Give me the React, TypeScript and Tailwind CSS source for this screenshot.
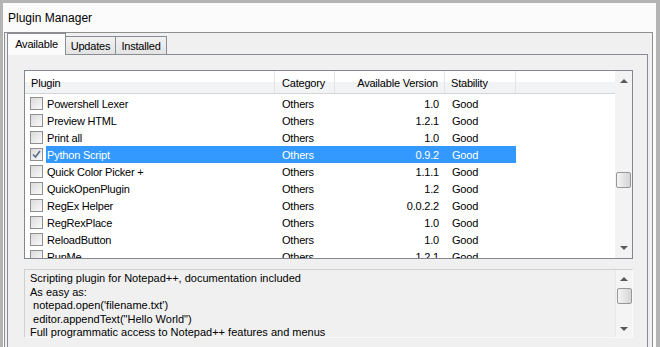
import { useState } from 'react'

const rows = [
  { name: 'Powershell Lexer', version: '1.0' },
  { name: 'Preview HTML', version: '1.2.1' },
  { name: 'Print all', version: '1.0' },
  { name: 'Python Script', version: '0.9.2', checked: true },
  { name: 'Quick Color Picker +', version: '1.1.1' },
  { name: 'QuickOpenPlugin', version: '1.2' },
  { name: 'RegEx Helper', version: '0.0.2.2' },
  { name: 'RegRexPlace', version: '1.0' },
  { name: 'ReloadButton', version: '1.0' },
  { name: 'RunMe', version: '1.2.1' },
]

function UpArrow() {
  return <div className="h-0 w-0 border-x-[4px] border-b-[4px] border-x-transparent border-b-[#5a5a5a]" />
}

function DownArrow() {
  return <div className="h-0 w-0 border-x-[4px] border-t-[4px] border-x-transparent border-t-[#5a5a5a]" />
}

function Thumb() {
  return (
    <div className="mx-auto h-[16px] w-[15px] rounded-[2px] border border-[#979797] bg-gradient-to-r from-[#f4f4f4] to-[#d4d4d4]" />
  )
}

function Checkbox({ checked }: { checked?: boolean }) {
  return (
    <div className="flex h-[13px] w-[13px] shrink-0 items-center justify-center border border-[#8f8f8f] bg-gradient-to-br from-[#dadada] to-[#fafafa]">
      {checked && (
        <svg width="9" height="9" viewBox="0 0 9 9">
          <path d="M1 4.5 L3.5 7 L8 1" fill="none" stroke="#5c6a8a" strokeWidth="1.6" />
        </svg>
      )}
    </div>
  )
}

function PluginList() {
  const [selected, setSelected] = useState(3)
  return (
    <div className="flex h-[189px] w-[609px] border border-[#828790] bg-white">
      <div className="flex w-[590px] flex-col overflow-hidden">
        {/* column headers */}
        <div className="flex h-[23px] shrink-0 border-b border-[#d5d5d5] bg-gradient-to-b from-white from-50% to-[#f2f3f5] to-50%">
          <div className="flex w-[250px] items-center border-r border-[#e3e4e6] pt-[3px] pl-[6px]">Plugin</div>
          <div className="flex w-[60px] items-center border-r border-[#e3e4e6] pt-[3px] pl-[7px]">Category</div>
          <div className="flex w-[110px] items-center justify-end border-r border-[#e3e4e6] pt-[3px] pr-[6px]">Available Version</div>
          <div className="flex w-[71px] items-center border-r border-[#e3e4e6] pt-[3px] pl-[6px]">Stability</div>
        </div>
        <div className="flex flex-col pt-[1px]">
          {rows.map((r, i) => {
            const sel = i === selected
            const hl = sel ? 'bg-[#3399ff] text-white' : ''
            return (
              <div key={r.name} className="flex h-[17px] shrink-0 cursor-default" onClick={() => setSelected(i)}>
                <div className="flex w-[250px] items-center pl-[5px]">
                  <Checkbox checked={r.checked} />
                  <div className={`ml-[3px] flex h-full flex-1 items-center pt-[1px] pl-[1px] ${hl}`}>{r.name}</div>
                </div>
                <div className={`flex w-[60px] items-center pt-[1px] pl-[7px] ${hl}`}>Others</div>
                <div className={`flex w-[110px] items-center justify-end pt-[1px] pr-[6px] ${hl}`}>{r.version}</div>
                <div className={`flex w-[71px] items-center pt-[1px] pl-[7px] ${hl}`}>Good</div>
              </div>
            )
          })}
        </div>
      </div>
      {/* scrollbar */}
      <div className="flex w-[17px] flex-col bg-[#f3f3f3]">
        <div className="flex h-[17px] items-center justify-center pt-[2px]"><UpArrow /></div>
        <div className="flex-1 pt-[84px]"><Thumb /></div>
        <div className="flex h-[17px] items-center justify-center pb-[4px]"><DownArrow /></div>
      </div>
    </div>
  )
}

function Description() {
  return (
    <div className="mt-[10px] flex h-[69px] w-[609px] border border-[#d0d0d0] border-r-[#fafafa] border-b-[#fafafa] bg-[#f0f0f0]">
      <div className="flex-1 whitespace-pre pt-[2px] pl-[5px] text-[11px] leading-[13.6px] tracking-normal">
        {'Scripting plugin for Notepad++, documentation included\nAs easy as:\n notepad.open(\'filename.txt\')\n editor.appendText("Hello World")\nFull programmatic access to Notepad++ features and menus'}
      </div>
      <div className="flex w-[17px] flex-col border-l border-[#e8e8e8] bg-[#f4f4f4]">
        <div className="flex h-[17px] items-center justify-center pt-[1px]"><UpArrow /></div>
        <div className="flex-1 pt-[1px]"><Thumb /></div>
        <div className="flex h-[17px] items-center justify-center"><DownArrow /></div>
      </div>
    </div>
  )
}

export default function App() {
  return (
    <div className="h-[347px] w-[660px] overflow-hidden border-t-[3px] border-r-[4px] border-l-[3px] border-[#b4b4b4] bg-[#fbfbfb] font-['Liberation_Sans',Arial,sans-serif] text-[11px] tracking-[-0.2px] text-black">
      <div className="flex h-[29px] items-center pl-[5px] text-[12px] tracking-normal">Plugin Manager</div>
      <div className="ml-[1px] mr-[3px] h-[400px] border border-[#8e8f8f] bg-[#f0f0f0]">
        {/* tabs */}
        <div className="relative z-10 flex h-[21px] items-end pl-[2px]">
          <div className="-mb-px flex h-[22px] w-[59px] items-center justify-center border border-b-0 border-[#898c95] bg-[#fbfbfb] pb-[1px]">Available</div>
          <div className="flex h-[18px] w-[50px] items-center justify-center border-r border-t border-[#898c95] bg-gradient-to-b from-[#f2f2f2] to-[#e3e3e3] pt-[1px]">Updates</div>
          <div className="flex h-[18px] w-[51px] items-center justify-center border-r border-t border-[#898c95] bg-gradient-to-b from-[#f2f2f2] to-[#e3e3e3] pt-[1px]">Installed</div>
        </div>
        <div className="ml-[2px] mr-[4px] h-[400px] border border-[#898c95] bg-[#f0f0f0] pt-[15px] pl-[16px]">
          <PluginList />
          <Description />
        </div>
      </div>
    </div>
  )
}
